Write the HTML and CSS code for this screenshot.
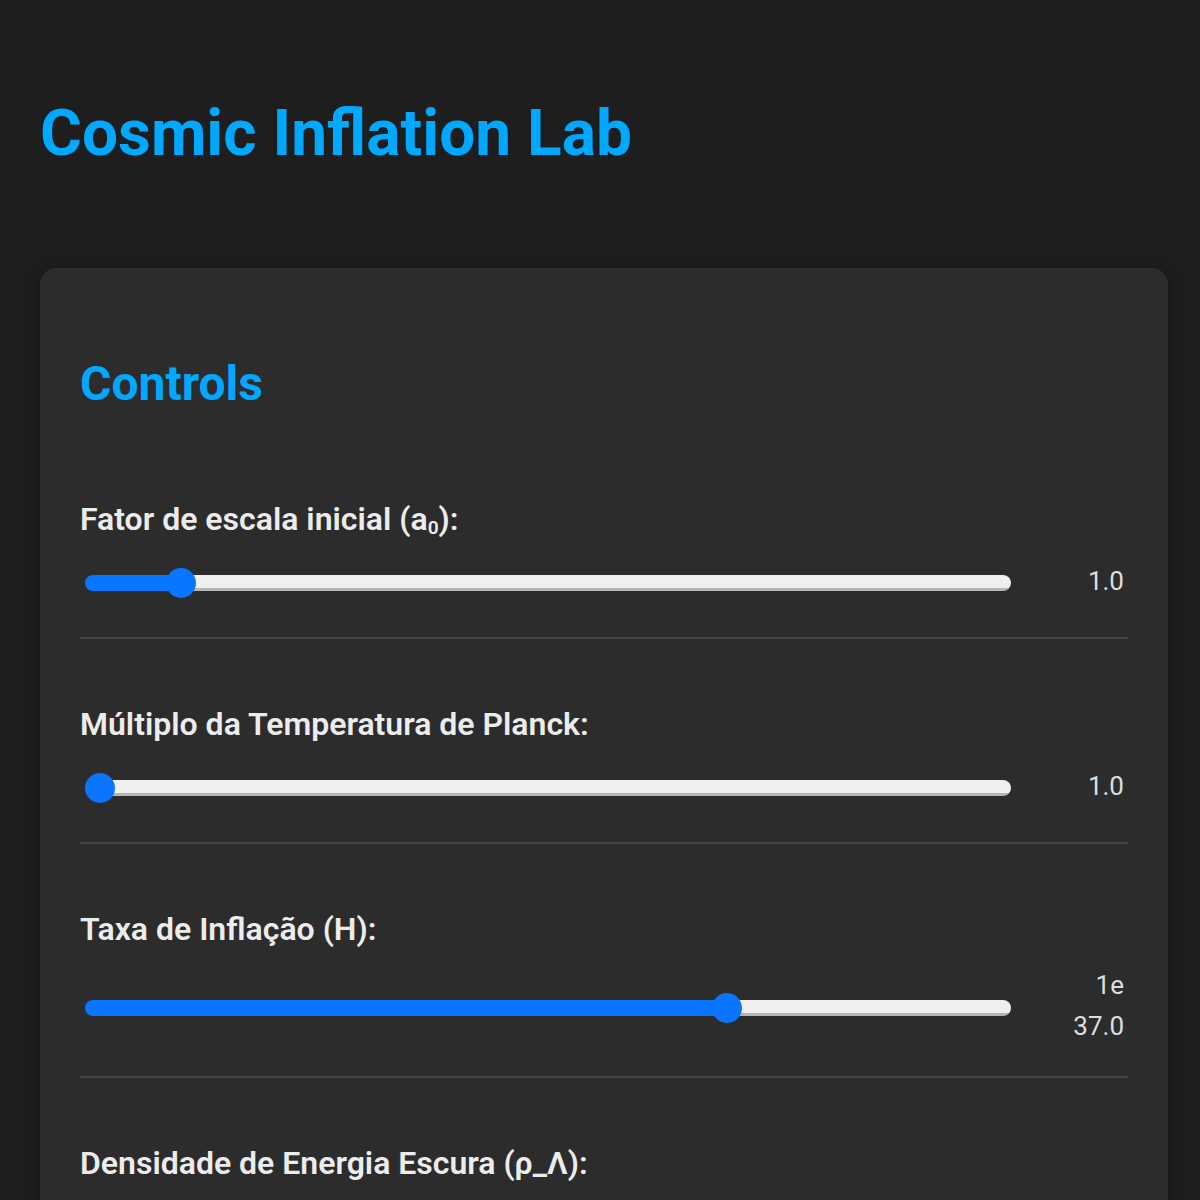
FILE: index.html
```html
<!DOCTYPE html>
<html lang="pt">
<head>
<meta charset="utf-8">
<title>Cosmic Inflation Lab</title>
<link rel="stylesheet" href="styles.css">
</head>
<body>
<main class="page">
  <h1 class="title">Cosmic Inflation Lab</h1>
  <section class="card">
    <h2 class="card-title">Controls</h2>

    <div class="control">
      <label class="control-label" for="a0">Fator de escala inicial (a<sub>0</sub>):</label>
      <div class="control-row">
        <input class="slider" id="a0" type="range" min="0.1" max="10" step="0.1" value="1" style="--p:0.0909">
        <span class="control-value">1.0</span>
      </div>
    </div>

    <div class="control">
      <label class="control-label" for="tp">Múltiplo da Temperatura de Planck:</label>
      <div class="control-row">
        <input class="slider" id="tp" type="range" min="1" max="10" step="0.1" value="1" style="--p:0">
        <span class="control-value">1.0</span>
      </div>
    </div>

    <div class="control">
      <label class="control-label" for="h">Taxa de Inflação (H):</label>
      <div class="control-row">
        <input class="slider" id="h" type="range" min="30" max="40" step="0.1" value="37" style="--p:0.7">
        <span class="control-value">1e 37.0</span>
      </div>
    </div>

    <div class="control">
      <label class="control-label" for="rho">Densidade de Energia Escura (ρ_Λ):</label>
      <div class="control-row">
        <input class="slider" id="rho" type="range" min="0" max="10" step="0.1" value="1" style="--p:0.1">
        <span class="control-value">1.0</span>
      </div>
    </div>
  </section>
</main>
</body>
</html>
```

FILE: styles.css
```css
html, body {
  margin: 0;
  padding: 0;
  background: #1e1e1e;
}

body {
  font-family: Roboto, "Liberation Sans", Arial, sans-serif;
  color: #ececec;
}

.page {
  padding: 0 32px 40px 40px;
}

.title {
  margin: 96px 0 97px;
  font-size: 64px;
  font-weight: 700;
  line-height: 75px;
  color: #00a8ff;
}

.card {
  background: #2c2c2c;
  border-radius: 16px;
  padding: 40px 40px 40px;
  box-shadow: 0 4px 18px rgba(0, 0, 0, 0.35);
}

.card-title {
  margin: 48px 0 88px;
  font-size: 48px;
  font-weight: 700;
  line-height: 56px;
  color: #00a8ff;
}

.control {
  padding-bottom: 29px;
  border-bottom: 2px solid #444;
  margin-bottom: 66px;
}

.control-label {
  display: block;
  font-size: 32px;
  font-weight: 600;
  line-height: 38px;
  color: #ececec;
  margin-bottom: 20px;
}

.control-label sub {
  font-size: 0.6em;
  line-height: 0;
  vertical-align: -0.22em;
}

.control-row {
  display: flex;
  align-items: center;
  min-height: 50px;
}

.control-value {
  width: 60px;
  margin-left: 53px;
  padding-right: 4px;
  margin-top: -3px;
  text-align: right;
  font-size: 26px;
  line-height: 41px;
  color: #dedede;
}

.slider {
  -webkit-appearance: none;
  appearance: none;
  flex: 1;
  min-width: 0;
  height: 30px;
  margin: 0 0 0 5px;
  background: transparent;
}

.slider:focus {
  outline: none;
}

.slider::-webkit-slider-runnable-track {
  height: 16px;
  border-radius: 8px;
  background:
    linear-gradient(to right, #0a75ff calc(15px + var(--p) * (100% - 30px)), transparent 0),
    linear-gradient(to bottom, #efefef calc(100% - 3px), #b5b5b5 0);
}

.slider::-webkit-slider-thumb {
  -webkit-appearance: none;
  appearance: none;
  width: 30px;
  height: 30px;
  margin-top: -7px;
  border-radius: 50%;
  background: #0a75ff;
  border: none;
}
```
